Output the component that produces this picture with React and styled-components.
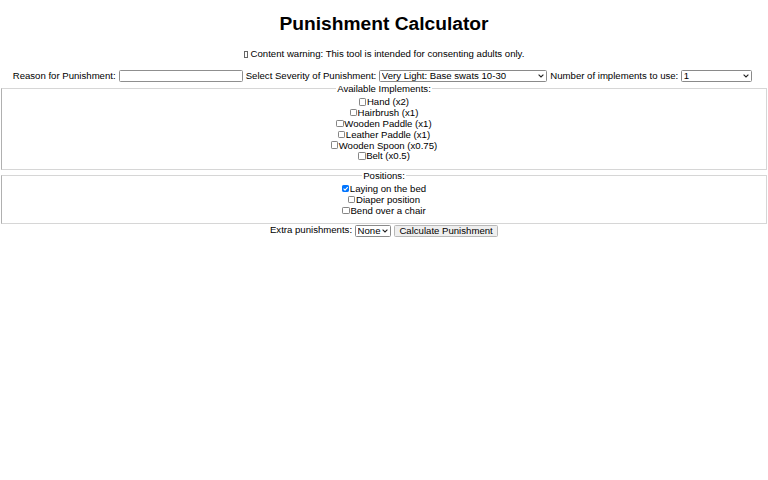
import React, { useState } from "react";
import styled, { createGlobalStyle } from "styled-components";

const GlobalStyle = createGlobalStyle`
  html, body {
    margin: 0;
    padding: 0;
    background: #ffffff;
  }
  body {
    font-family: "Liberation Sans", Arial, sans-serif;
    font-size: 9.6px;
    color: #000000;
    text-align: center;
  }
`;

const chevron =
  "url(\"data:image/svg+xml,%3Csvg xmlns='http://www.w3.org/2000/svg' width='6' height='4' viewBox='0 0 6 4'%3E%3Cpath d='M0.6 0.7 L3 3 L5.4 0.7' fill='none' stroke='%23222' stroke-width='1.1'/%3E%3C/svg%3E\")";

const tick =
  "url(\"data:image/svg+xml,%3Csvg xmlns='http://www.w3.org/2000/svg' width='8' height='8' viewBox='0 0 8 8'%3E%3Cpath d='M1.6 4.1 L3.3 5.8 L6.5 2.2' fill='none' stroke='%23fff' stroke-width='1.3'/%3E%3C/svg%3E\")";

const Title = styled.h1`
  font-size: 19.2px;
  font-weight: bold;
  line-height: 22px;
  margin: 13px 0 13px;
`;

const Warning = styled.p`
  margin: 0 0 9.6px;
  line-height: 11px;
`;

/* missing-glyph box shown before the warning */
const Glyph = styled.span`
  display: inline-block;
  box-sizing: border-box;
  width: 4px;
  height: 7px;
  border: 0.6px solid #666;
  margin-right: 3px;
  vertical-align: -0.5px;
`;

const Row = styled.div`
  line-height: 11px;
  padding: 1px 0;
`;

const Label = styled.label`
  font-size: 9.6px;
`;

const TextInput = styled.input`
  font-family: "Liberation Sans", Arial, sans-serif;
  font-size: 8px;
  width: 124px;
  height: 12.5px;
  box-sizing: border-box;
  padding: 0 2px;
  margin: 0 3px;
  border: 1px solid #8f8f8f;
  border-radius: 1.5px;
  vertical-align: middle;
  background: #fff;
`;

const Select = styled.select`
  appearance: none;
  -webkit-appearance: none;
  font-family: "Liberation Sans", Arial, sans-serif;
  font-size: 9.6px;
  color: #000;
  width: ${(p) => p.$w}px;
  height: 12.5px;
  line-height: 10.5px;
  box-sizing: border-box;
  padding: 0 8px 0 1.5px;
  margin: 0 3px;
  border: 1px solid #8a8a8a;
  border-radius: 1.5px;
  background: #fff ${chevron} no-repeat right 2.5px center / 6px 4px;
  vertical-align: middle;
  text-align: left;
`;

const Fieldset = styled.fieldset`
  margin: 0 1.2px;
  padding: 3px 7px 7px;
  border: 1.2px groove #d6d6d6;
  border-left-color: #b0b0b0;
  line-height: 10.8px;
`;

const Legend = styled.legend`
  margin: 0 auto;
  padding: 0 1.2px;
  line-height: 11px;
`;

const Check = styled.input`
  appearance: none;
  -webkit-appearance: none;
  display: inline-block;
  box-sizing: border-box;
  width: 7.4px;
  height: 7.4px;
  margin: 0 0.6px 0 0;
  border: 0.7px solid #858585;
  border-radius: 1.2px;
  background: #fff;
  vertical-align: -0.3px;

  &:checked {
    border-color: #0075ff;
    background: #0075ff ${tick} no-repeat center / 7px 7px;
  }
`;

const Actions = styled.div`
  padding-top: 0;
  line-height: 12px;
`;

const Button = styled.button`
  font-family: "Liberation Sans", Arial, sans-serif;
  font-size: 9.6px;
  color: #000;
  width: 104px;
  height: 12.5px;
  padding: 0;
  margin: 0;
  background: #efefef;
  border: 1px solid #b8b8b8;
  border-radius: 1.5px;
  vertical-align: middle;
  line-height: 10px;
`;

const implementsList = [
  "Hand (x2)",
  "Hairbrush (x1)",
  "Wooden Paddle (x1)",
  "Leather Paddle (x1)",
  "Wooden Spoon (x0.75)",
  "Belt (x0.5)",
];

const positions = ["Laying on the bed", "Diaper position", "Bend over a chair"];

export default function App() {
  const [picked, setPicked] = useState({});
  const [pose, setPose] = useState({ "Laying on the bed": true });

  return (
    <>
      <GlobalStyle />
      <Title>Punishment Calculator</Title>
      <Warning>
        <Glyph />
        Content warning: This tool is intended for consenting adults only.
      </Warning>
      <Row>
        <Label htmlFor="reason">Reason for Punishment:</Label>
        <TextInput id="reason" type="text" />
        <Label htmlFor="severity">Select Severity of Punishment:</Label>
        <Select id="severity" $w={168}>
          <option>Very Light: Base swats 10-30</option>
          <option>Light: Base swats 30-50</option>
          <option>Medium: Base swats 50-80</option>
          <option>Hard: Base swats 80-120</option>
        </Select>
        <Label htmlFor="count">Number of implements to use:</Label>
        <Select id="count" $w={71}>
          <option>1</option>
          <option>2</option>
          <option>3</option>
        </Select>
      </Row>
      <Fieldset>
        <Legend>Available Implements:</Legend>
        {implementsList.map((name) => (
          <div key={name}>
            <label>
              <Check
                type="checkbox"
                checked={!!picked[name]}
                onChange={() => setPicked({ ...picked, [name]: !picked[name] })}
              />
              {name}
            </label>
          </div>
        ))}
      </Fieldset>
      <Fieldset>
        <Legend>Positions:</Legend>
        {positions.map((name) => (
          <div key={name}>
            <label>
              <Check
                type="checkbox"
                checked={!!pose[name]}
                onChange={() => setPose({ ...pose, [name]: !pose[name] })}
              />
              {name}
            </label>
          </div>
        ))}
      </Fieldset>
      <Actions>
        <Label htmlFor="extra">Extra punishments:</Label>
        <Select id="extra" $w={36}>
          <option>None</option>
          <option>Corner time</option>
          <option>Lines</option>
        </Select>
        <Button type="button">Calculate Punishment</Button>
      </Actions>
    </>
  );
}
